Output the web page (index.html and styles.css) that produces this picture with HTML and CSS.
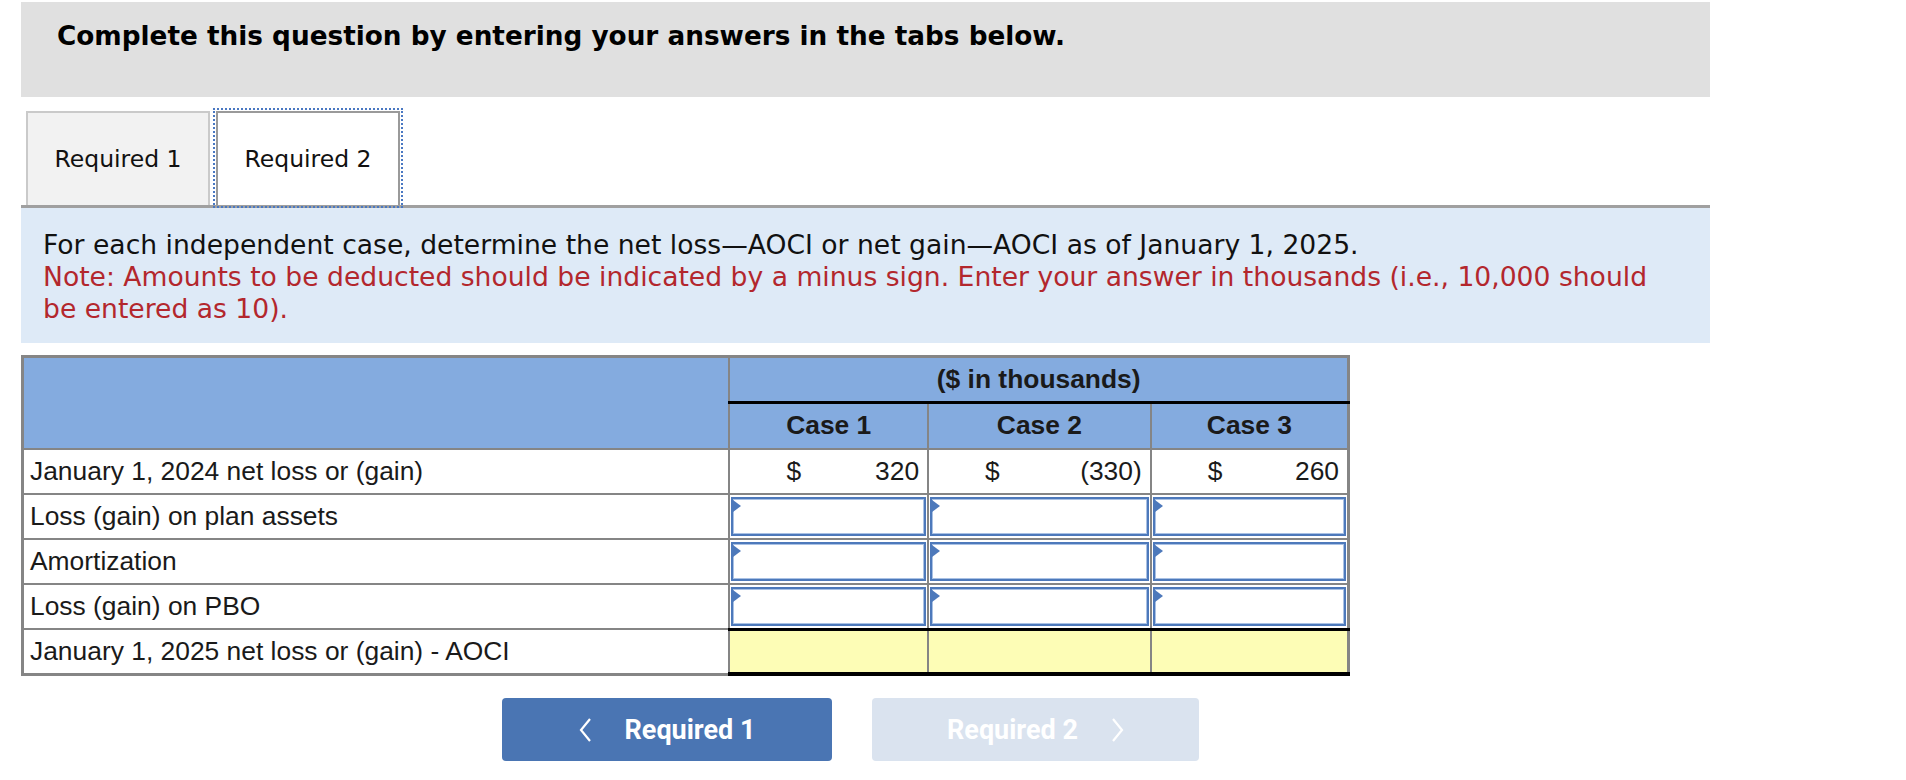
FILE: index.html
```html
<!DOCTYPE html>
<html lang="en">
<head>
  <meta charset="UTF-8">
  <meta name="viewport" content="width=device-width, initial-scale=1.0">
  <title>Required 2</title>
  <link rel="stylesheet" href="styles.css">
</head>
<body>

  <div class="wrap">
    <div class="intro">
      <h2>Complete this question by entering your answers in the tabs below.</h2>
    </div>

    <div class="tabs">
      <div class="tab">Required 1</div>
      <div class="tab active">Required 2</div>
    </div>

    <div class="question">
      <p>For each independent case, determine the net loss&mdash;AOCI or net gain&mdash;AOCI as of January 1, 2025.</p>
      <p class="note">Note: Amounts to be deducted should be indicated by a minus sign. Enter your answer in thousands (i.e., 10,000 should be entered as 10).</p>
    </div>

    <table class="grid">
      <colgroup>
        <col class="c-label">
        <col class="c-1">
        <col class="c-2">
        <col class="c-3">
      </colgroup>
      <thead>
        <tr>
          <th rowspan="2"></th>
          <th colspan="3" class="units">($ in thousands)</th>
        </tr>
        <tr>
          <th>Case 1</th>
          <th>Case 2</th>
          <th>Case 3</th>
        </tr>
      </thead>
      <tbody>
        <tr>
          <td class="label">January 1, 2024 net loss or (gain)</td>
          <td><div class="amt"><span>$</span><span>320</span></div></td>
          <td><div class="amt"><span>$</span><span>(330)</span></div></td>
          <td><div class="amt"><span>$</span><span>260</span></div></td>
        </tr>
        <tr>
          <td class="label">Loss (gain) on plan assets</td>
          <td class="entry"><div class="inp"></div></td>
          <td class="entry"><div class="inp"></div></td>
          <td class="entry"><div class="inp"></div></td>
        </tr>
        <tr>
          <td class="label">Amortization</td>
          <td class="entry"><div class="inp"></div></td>
          <td class="entry"><div class="inp"></div></td>
          <td class="entry"><div class="inp"></div></td>
        </tr>
        <tr>
          <td class="label">Loss (gain) on PBO</td>
          <td class="entry"><div class="inp"></div></td>
          <td class="entry"><div class="inp"></div></td>
          <td class="entry"><div class="inp"></div></td>
        </tr>
        <tr class="total">
          <td class="label">January 1, 2025 net loss or (gain) - AOCI</td>
          <td class="sum"></td>
          <td class="sum"></td>
          <td class="sum"></td>
        </tr>
      </tbody>
    </table>

    <div class="nav">
      <button class="btn prev">
        <svg width="13" height="26" viewBox="0 0 13 26"><polyline points="11,2 2,13 11,24" fill="none" stroke="#fff" stroke-width="2.2"/></svg>
        <span>Required 1</span>
      </button>
      <button class="btn next" disabled>
        <span>Required 2</span>
        <svg width="13" height="26" viewBox="0 0 13 26"><polyline points="2,2 11,13 2,24" fill="none" stroke="#fff" stroke-width="2.2"/></svg>
      </button>
    </div>
  </div>

</body>
</html>
```

FILE: styles.css
```css
* {
  box-sizing: border-box;
}

body {
  margin: 0;
  padding: 2px 0 0 21px;
  background: #fff;
  color: #111;
  font-family: "DejaVu Sans", Verdana, sans-serif;
}

.wrap {
  width: 1689px;
}

.intro {
  height: 95px;
  background-color: #e0e0e0;
  padding: 19px 36px;
}

.intro h2 {
  margin: 0;
  font-size: 26.3px;
  font-weight: bold;
  line-height: 30px;
  color: #000;
}

/* tabs */

.tabs {
  display: flex;
  margin-top: 14px;
  padding-left: 5px;
  border-bottom: 3px solid #a0a0a0;
}

.tab {
  width: 184px;
  height: 94px;
  display: flex;
  align-items: center;
  justify-content: center;
  font-size: 23.5px;
  color: #111;
  background-color: #f2f2f2;
  border: 2px solid #cacaca;
  border-bottom: none;
}

.tab.active {
  margin-left: 6px;
  background-color: #fff;
  border-color: #9a9a9a;
  outline: 2px dotted #4a78c2;
  outline-offset: 1px;
}

/* question text */

.question {
  background-color: #deeaf7;
  padding: 21px 22px 18px;
  font-size: 26.6px;
  line-height: 32px;
}

.question p {
  margin: 0;
}

.note {
  color: #b3272d;
}

/* answer table */

.grid {
  margin-top: 12px;
  width: 1329px;
  border-collapse: collapse;
  border: 3px solid #858585;
  font-family: "Liberation Sans", Arial, sans-serif;
  font-size: 26.4px;
  color: #1a1a1a;
}

.c-label { width: 709px; }
.c-1 { width: 199px; }
.c-2 { width: 223px; }
.c-3 { width: 198px; }

.grid th {
  height: 46px;
  background-color: #84abdf;
  border: 2px solid #858585;
  font-weight: bold;
  padding: 0;
}

.grid th.units {
  border-bottom: 3px solid #000;
}

.grid td {
  height: 45px;
  border: 2px solid #858585;
  padding: 0;
}

.label {
  padding: 0 6px !important;
}

.amt {
  display: flex;
  justify-content: space-between;
  padding: 0 8px 0 56px;
}

.entry {
  padding: 2px 1px !important;
}

.inp {
  position: relative;
  height: 39px;
  border: 2px solid #4d79bb;
  box-shadow: inset 0 0 0 1px #a9c1e4;
  background-color: #fff;
}

.inp::before {
  content: "";
  position: absolute;
  left: 0;
  top: 1px;
  border-top: 6px solid transparent;
  border-bottom: 6px solid transparent;
  border-left: 8px solid #4d79bb;
}

.total .sum {
  background-color: #fdfdb6;
  border-top: 3px solid #000;
  border-bottom: 4px solid #000;
}

/* prev / next buttons */

.nav {
  display: flex;
  gap: 40px;
  margin-top: 22px;
  padding-left: 481px;
}

.btn {
  height: 63px;
  display: flex;
  align-items: center;
  justify-content: center;
  gap: 33px;
  border: none;
  border-radius: 4px;
  font-family: Roboto, "Liberation Sans", sans-serif;
  font-size: 27px;
  font-weight: bold;
  color: #fff;
  cursor: pointer;
}

.prev {
  width: 330px;
  background-color: #4a75b3;
}

.next {
  width: 327px;
  background-color: #dae3ef;
  cursor: default;
}
```
